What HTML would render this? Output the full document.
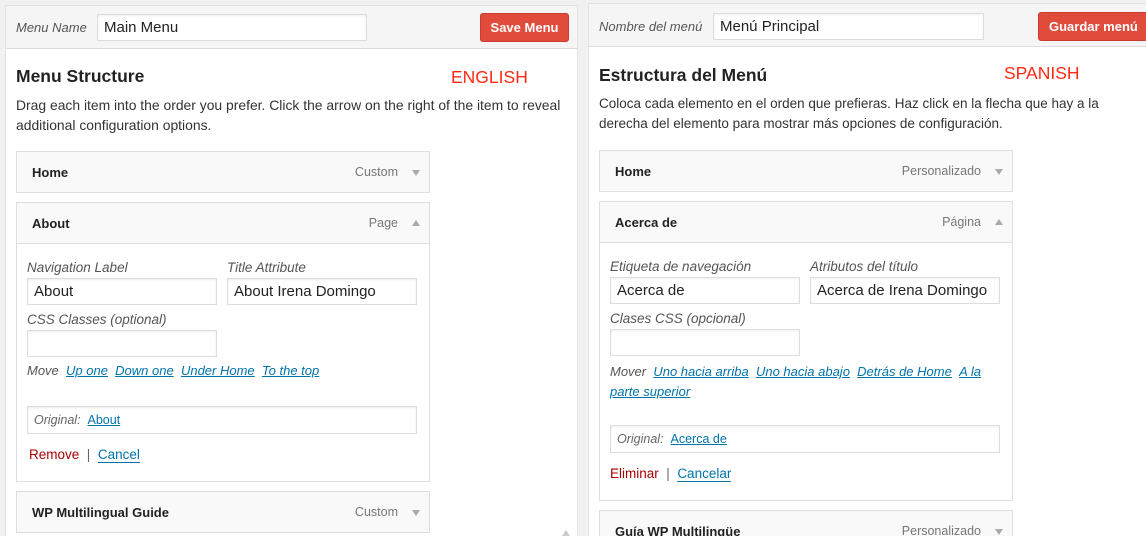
<!DOCTYPE html>
<html style="overflow:hidden"><head><meta charset="utf-8"><style>
*{margin:0;padding:0;box-sizing:border-box}
html,body{width:1146px;height:536px;overflow:hidden}
body{background:#f1f1f1;font-family:"Liberation Sans",sans-serif;color:#333;position:relative}
.a{position:absolute;white-space:nowrap}
.panel{position:absolute;background:#fff;border:1px solid #e3e3e3}
.hdr{position:absolute;background:#f5f5f5;border-bottom:1px solid #dedede}
.inp{position:absolute;background:#fff;border:1px solid #ddd;box-shadow:inset 0 1px 2px rgba(0,0,0,.07);font-size:15px;color:#222;padding-left:6px;display:flex;align-items:center}
.btn{position:absolute;background:#e04b3c;border:1px solid #c93c2e;border-radius:3px;color:#fff;font-weight:bold;font-size:13px;display:flex;align-items:center;justify-content:center}
.it{position:absolute;background:#f9f9f9;border:1px solid #dfdfdf;font-size:13px}
.it b{position:absolute;left:15px;top:13px;color:#222}
.it span{position:absolute;top:13px;color:#777;font-size:12.5px}
.tri{position:absolute;width:0;height:0;border-left:4px solid transparent;border-right:4px solid transparent}
.dn{border-top:6px solid #aaa}
.up{border-bottom:6px solid #aaa}
.body{position:absolute;background:#fff;border:1px solid #dfdfdf;border-top:none}
.lbl{position:absolute;font-style:italic;color:#555;font-size:13.5px;white-space:nowrap}
.mv{position:absolute;font-style:italic;color:#555;font-size:13px;white-space:nowrap}
.lk{color:#0073aa;text-decoration:underline}
.red{color:#ff2a14;font-size:17.5px;position:absolute}
</style></head><body>

<!-- LEFT -->
<div class="panel" style="left:5px;top:5px;width:573px;height:540px"></div>
<div class="hdr" style="left:6px;top:6px;width:571px;height:43px"></div>
<div class="lbl" style="left:16px;top:20px;font-size:13px">Menu Name</div>
<div class="inp" style="left:97px;top:14px;width:270px;height:27px">Main Menu</div>
<div class="btn" style="left:480px;top:13px;width:89px;height:29px">Save Menu</div>
<div class="a" style="left:16px;top:66px;font-size:17.5px;font-weight:bold;color:#222">Menu Structure</div>
<div class="red" style="left:451px;top:67px">ENGLISH</div>
<div class="a" style="left:16px;top:95px;font-size:13.9px;line-height:20px">Drag each item into the order you prefer. Click the arrow on the right of the item to reveal<br>additional configuration options.</div>

<div class="it" style="left:16px;top:151px;width:414px;height:42px"><b>Home</b><span style="right:31px">Custom</span><div class="tri dn" style="right:9px;top:18px"></div></div>
<div class="it" style="left:16px;top:202px;width:414px;height:42px"><b>About</b><span style="right:31px">Page</span><div class="tri up" style="right:9px;top:17px"></div></div>
<div class="body" style="left:16px;top:244px;width:414px;height:238px"></div>
<div class="lbl" style="left:27px;top:260px">Navigation Label</div>
<div class="lbl" style="left:227px;top:260px">Title Attribute</div>
<div class="inp" style="left:27px;top:278px;width:190px;height:27px">About</div>
<div class="inp" style="left:227px;top:278px;width:190px;height:27px">About Irena Domingo</div>
<div class="lbl" style="left:27px;top:312px">CSS Classes (optional)</div>
<div class="inp" style="left:27px;top:330px;width:190px;height:27px"></div>
<div class="mv" style="left:27px;top:363px">Move &nbsp;<span class="lk">Up one</span> &nbsp;<span class="lk">Down one</span> &nbsp;<span class="lk">Under Home</span> &nbsp;<span class="lk">To the top</span></div>
<div class="inp" style="left:27px;top:406px;width:390px;height:28px;font-size:12.5px"><i style="color:#666">Original:</i>&nbsp;&nbsp;<span class="lk">About</span></div>
<div class="a" style="left:29px;top:447px;font-size:13.5px"><span style="color:#a00">Remove</span> <span style="color:#666">&nbsp;|&nbsp;</span> <span style="color:#0073aa;border-bottom:1px solid #0073aa">Cancel</span></div>
<div class="it" style="left:16px;top:491px;width:414px;height:42px"><b>WP Multilingual Guide</b><span style="right:31px">Custom</span><div class="tri dn" style="right:9px;top:18px"></div></div>
<div class="tri up" style="left:562px;top:530px;border-bottom-color:#ccc"></div>

<!-- RIGHT -->
<div class="panel" style="left:588px;top:3px;width:570px;height:540px"></div>
<div class="hdr" style="left:589px;top:4px;width:570px;height:43px"></div>
<div class="lbl" style="left:599px;top:19px;font-size:13px">Nombre del menú</div>
<div class="inp" style="left:713px;top:13px;width:271px;height:27px">Menú Principal</div>
<div class="btn" style="left:1038px;top:12px;width:110px;height:29px;justify-content:flex-start;padding-left:10px">Guardar menú</div>
<div class="a" style="left:599px;top:65px;font-size:17.5px;font-weight:bold;color:#222">Estructura del Menú</div>
<div class="red" style="left:1004px;top:63px">SPANISH</div>
<div class="a" style="left:599px;top:94px;font-size:13.5px;line-height:20px">Coloca cada elemento en el orden que prefieras. Haz click en la flecha que hay a la<br>derecha del elemento para mostrar más opciones de configuración.</div>

<div class="it" style="left:599px;top:150px;width:414px;height:42px"><b>Home</b><span style="right:31px">Personalizado</span><div class="tri dn" style="right:9px;top:18px"></div></div>
<div class="it" style="left:599px;top:201px;width:414px;height:42px"><b>Acerca de</b><span style="right:31px">Página</span><div class="tri up" style="right:9px;top:17px"></div></div>
<div class="body" style="left:599px;top:243px;width:414px;height:258px"></div>
<div class="lbl" style="left:610px;top:259px">Etiqueta de navegación</div>
<div class="lbl" style="left:810px;top:259px">Atributos del título</div>
<div class="inp" style="left:610px;top:277px;width:190px;height:27px">Acerca de</div>
<div class="inp" style="left:810px;top:277px;width:190px;height:27px">Acerca de Irena Domingo</div>
<div class="lbl" style="left:610px;top:311px">Clases CSS (opcional)</div>
<div class="inp" style="left:610px;top:329px;width:190px;height:27px"></div>
<div class="mv" style="left:610px;top:362px;line-height:20px">Mover &nbsp;<span class="lk">Uno hacia arriba</span> &nbsp;<span class="lk">Uno hacia abajo</span> &nbsp;<span class="lk">Detrás de Home</span> &nbsp;<span class="lk">A la</span><br><span class="lk">parte superior</span></div>
<div class="inp" style="left:610px;top:425px;width:390px;height:28px;font-size:12.5px"><i style="color:#666">Original:</i>&nbsp;&nbsp;<span class="lk">Acerca de</span></div>
<div class="a" style="left:610px;top:466px;font-size:13.5px"><span style="color:#a00">Eliminar</span> <span style="color:#666">&nbsp;|&nbsp;</span> <span style="color:#0073aa;border-bottom:1px solid #0073aa">Cancelar</span></div>
<div class="it" style="left:599px;top:510px;width:414px;height:42px"><b>Guía WP Multilingüe</b><span style="right:31px">Personalizado</span><div class="tri dn" style="right:9px;top:18px"></div></div>
</body></html>
